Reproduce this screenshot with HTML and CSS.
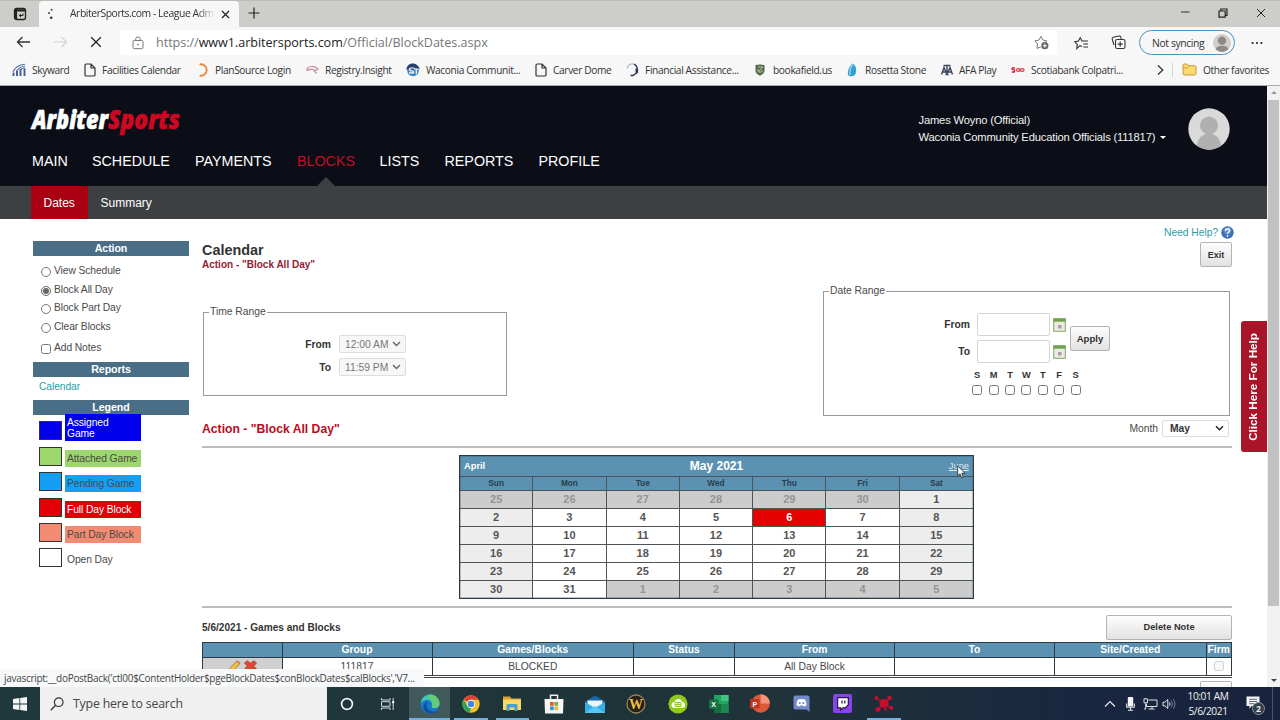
FILE: index.html
```html
<!DOCTYPE html>
<html lang="en">
<head>
    <meta charset="UTF-8">
    <meta name="viewport" content="width=device-width, initial-scale=1.0">
    <title>ArbiterSports.com - League Administration</title>
    <link rel="stylesheet" href="styles.css">
</head>
<body>

    <!-- Browser tabs -->
    <div class="titlebar">
        <div class="tab-actions">
            <svg width="14" height="14" viewBox="0 0 14 14"><rect x="1.5" y="1.5" width="11" height="11" rx="2" fill="none" stroke="#222" stroke-width="1.3"/><path d="M1.5 3.3h11M3 1.5v11" stroke="#222" stroke-width="2.2"/><path d="M10 6.5v2H6.5M8 7L6.3 8.5 8 10" fill="none" stroke="#222"/></svg>
        </div>
        <div class="tab">
            <svg class="spinner" width="8" height="12" viewBox="0 0 8 12"><circle cx="4.6" cy="1.8" r="1" fill="#444"/><circle cx="2" cy="5" r="1" fill="#444"/><circle cx="4.2" cy="9.8" r="1.2" fill="#222"/></svg>
            <span class="tab-title">ArbiterSports.com - League Adm</span>
            <svg width="9" height="9" viewBox="0 0 9 9"><path d="M1 1l7 7M8 1L1 8" stroke="#222" stroke-width="1.2"/></svg>
        </div>
        <svg class="new-tab" width="12" height="12" viewBox="0 0 12 12"><path d="M6 0.5v11M0.5 6h11" stroke="#222" stroke-width="1.2"/></svg>
        <div class="window-buttons">
            <svg width="10" height="10" viewBox="0 0 10 10"><path d="M1 4h8.5" stroke="#333"/></svg>
            <svg width="10" height="10" viewBox="0 0 10 10"><path d="M1 3h6.2v6.2H1zM2.8 2.8V1H9v6.5H7.4" fill="none" stroke="#222" stroke-width="1.2"/></svg>
            <svg width="10" height="10" viewBox="0 0 10 10"><path d="M1 1l8 8M9 1L1 9" stroke="#222"/></svg>
        </div>
    </div>

    <!-- Address bar -->
    <div class="toolbar">
        <div class="nav-buttons">
            <svg width="15" height="12" viewBox="0 0 15 12"><path d="M14 6H1.5M6.5 1L1.5 6l5 5" fill="none" stroke="#333" stroke-width="1.3"/></svg>
            <svg width="15" height="12" viewBox="0 0 15 12"><path d="M1 6h12.5M8.5 1l5 5-5 5" fill="none" stroke="#d2d2d2" stroke-width="1.2"/></svg>
            <svg width="12" height="12" viewBox="0 0 12 12"><path d="M1.2 1.2l9.6 9.6M10.8 1.2l-9.6 9.6" stroke="#222" stroke-width="1.3"/></svg>
        </div>
        <div class="address">
            <svg width="12" height="14" viewBox="0 0 12 14"><rect x="1" y="4.5" width="10" height="8.2" rx="1.3" fill="none" stroke="#777"/><path d="M3.7 4.5V3.2a2.3 2.3 0 0 1 4.6 0v1.3" fill="none" stroke="#777"/><circle cx="6" cy="8.6" r="0.9" fill="#777"/></svg>
            <span class="url">https://<b>www1.arbitersports.com</b>/Official/BlockDates.aspx</span>
            <svg width="15" height="15" viewBox="0 0 15 15"><path d="M6.7 12L3 13.4l.5-4.5L.9 5.8l3.9-.6L7 1.4l2 3.7 3.8.8-1.6 1.6" fill="none" stroke="#777"/><circle cx="10.8" cy="10.7" r="3.6" fill="#666"/><path d="M10.8 8.7v4M8.8 10.7h4" stroke="#fff"/></svg>
        </div>
        <svg class="tool-fav" width="15" height="14" viewBox="0 0 15 14"><path d="M8 10.5L6 9.7 2.8 12.6 3.3 8.4.8 5.7l3.7-.6L6.2 1.6 8 5h1.5" fill="none" stroke="#333" stroke-width="1.1"/><path d="M9.3 5H14M9.3 8H14M9.3 11H14" stroke="#333" stroke-width="1.1"/></svg>
        <svg class="tool-col" width="15" height="15" viewBox="0 0 15 15"><rect x="4.5" y="4.5" width="9.5" height="9" rx="1.8" fill="none" stroke="#333" stroke-width="1.1"/><path d="M9.2 6.5v5.2M6.6 9.1h5.2M3 10L1.2 4a1.5 1.5 0 0 1 1-1.8L8 1a1.5 1.5 0 0 1 1.8 1.2l.4 1.6" fill="none" stroke="#333" stroke-width="1.1"/></svg>
        <div class="profile-pill">
            <span>Not syncing</span>
            <svg width="18" height="18" viewBox="0 0 18 18"><clipPath id="pc"><circle cx="9" cy="9" r="9"/></clipPath><circle cx="9" cy="9" r="9" fill="#d1cfcb"/><g clip-path="url(#pc)" fill="#8e8b87"><circle cx="9" cy="6.6" r="4.2"/><ellipse cx="9" cy="15.4" rx="6.4" ry="3.6"/></g></svg>
        </div>
        <svg class="tool-more" width="12" height="4" viewBox="0 0 12 4"><circle cx="1.6" cy="2" r="1.1" fill="#222"/><circle cx="6" cy="2" r="1.1" fill="#222"/><circle cx="10.4" cy="2" r="1.1" fill="#222"/></svg>
    </div>

    <!-- Favorites bar -->
    <div class="bookmarks">
        <a class="bookmark bm-skyward"><svg width="15" height="14" viewBox="0 0 15 14"><path d="M1.5 13V9.5M5 13V7.500M8.500 13V6M12.500 13V5.500" stroke="#405a9c" stroke-width="1.900"/><path d="M1 9Q4 2 13 1.300M4.500 8Q8 3.400 13 3.200M8 7.500Q9.500 5 13 5" fill="none" stroke="#5a70ab" stroke-width="1.100"/></svg><span>Skyward</span></a>
        <a class="bookmark bm-facilities"><svg width="12" height="14" viewBox="0 0 12 14"><path d="M1 2.2Q1 1 2.2 1H7l4 4v7q0 1-1 1H2.2Q1 13 1 12zM7 1v4h4" fill="none" stroke="#333" stroke-width="1.2"/></svg><span>Facilities Calendar</span></a>
        <a class="bookmark bm-plan"><svg width="13" height="14" viewBox="0 0 13 14"><path d="M3.500 1.500a5.700 5.700 0 1 1 0 11" fill="none" stroke="#e6893e" stroke-width="1.800"/></svg><span>PlanSource Login</span></a>
        <a class="bookmark bm-registry"><svg width="13" height="10" viewBox="0 0 13 10"><path d="M1 5.200C1 .8 8.500 0 12 4.200L8.500 5.500 6 4.200zM8 5.500l2.500 3" fill="none" stroke="#ca8998" stroke-width="1.200"/></svg><span>Registry.Insight</span></a>
        <a class="bookmark bm-waconia"><svg width="14" height="14" viewBox="0 0 14 14"><circle cx="7" cy="7.500" r="5.800" fill="#3f87bf"/><path d="M.3 6.500C1 1 6 0 8.500 .8S13.500 4 13.600 6z" fill="#24416e"/><path d="M8.500 5H5q-2 0-1.500 1.500T6 8q2 .3 1.500 1.800H3M8 6h4.500M10.300 6v5" fill="none" stroke="#fff" stroke-width="1.200"/></svg><span>Waconia Communit...</span></a>
        <a class="bookmark bm-carver"><svg width="12" height="14" viewBox="0 0 12 14"><path d="M1 2.200Q1 1 2.200 1H7l4 4v7q0 1-1 1H2.200Q1 13 1 12zM7 1v4h4" fill="none" stroke="#333" stroke-width="1.200"/></svg><span>Carver Dome</span></a>
        <a class="bookmark bm-financial"><svg width="13" height="14" viewBox="0 0 13 14"><path d="M1.200 5.500A5 5 0 0 1 8 1.200" fill="none" stroke="#b9bfcc" stroke-width="1.400"/><path d="M8 1.200Q12.500 3.500 11 9.500L7 12.500H4.500" fill="none" stroke="#2b3558" stroke-width="1.300"/><path d="M9.500 5.500l2.800.5-.6 4.200-2.200-.6z" fill="#2b3558"/></svg><span>Financial Assistance...</span></a>
        <a class="bookmark bm-book"><svg width="10" height="12" viewBox="0 0 10 12"><path d="M.5 1L5 .5l4.500.5v6Q9 10 5 11.700 1 10 .5 7z" fill="#53694b"/><path d="M3 3h5L3.500 7.500M3 5v3h4V6" fill="none" stroke="#b7c5a0"/></svg><span>bookafield.us</span></a>
        <a class="bookmark bm-rosetta"><svg width="10" height="14" viewBox="0 0 10 14"><path d="M5.500.5Q9 2 9.200 7T6 13.200Q1 14 .8 10.500.8 5 5.500.5z" fill="#38a0cf"/><path d="M6 1.500Q2.500 5 3 12" fill="none" stroke="#90d3ec" stroke-width="1.300"/></svg><span>Rosetta Stone</span></a>
        <a class="bookmark bm-afa"><svg width="12" height="12" viewBox="0 0 12 12"><path d="M2.500 1.500h7M6 1.500v9M4.500 10.500h3M.5 10.500l2.500-7 2.500 5.500M1.500 8h3M6.500 9L9 3.500l2.500 7M7.500 8h3.500" fill="none" stroke="#36445d" stroke-width="1.400"/></svg><span>AFA Play</span></a>
        <a class="bookmark bm-scotia"><svg width="14" height="6" viewBox="0 0 14 6"><path d="M3.800 1H1.500l-.5 1 2.700 1.300L3.200 5H.8" fill="none" stroke="#d8192f" stroke-width="1.300"/><ellipse cx="7.300" cy="3" rx="1.700" ry="1.400" fill="none" stroke="#dc3a4c" stroke-width="1.200"/><ellipse cx="11.200" cy="3" rx="1.900" ry="1.400" fill="none" stroke="#dc3a4c" stroke-width="1.200"/></svg><span>Scotiabank Colpatri...</span></a>
        <a class="bookmark bm-more"><svg width="7" height="12" viewBox="0 0 7 12"><path d="M1 1.500L5.800 6 1 10.500" fill="none" stroke="#333" stroke-width="1.300"/></svg></a>
        <a class="bookmark bm-other"><svg width="15" height="13" viewBox="0 0 15 13"><path d="M1 2.500Q1 1 2.200 1H5l1.700 1.700h6Q14 2.700 14 4v6.500q0 1.500-1.300 1.500H2.300Q1 12 1 10.500z" fill="#fbdb70" stroke="#c39b3a"/><path d="M1 5h4.500L7 3.300" fill="none" stroke="#c9a443"/></svg><span>Other favorites</span></a>
    </div>

    <!-- Site -->
    <div class="viewport">
        <div class="page">
            <div class="header">
                <div class="header-top">
                    <svg class="logo" width="152" height="30" viewBox="0 0 152 30">
                        <text x="0" y="22.500" textLength="76" lengthAdjust="spacingAndGlyphs" fill="#fff" stroke="#fff">Arbiter</text>
                        <text x="76" y="22.500" textLength="72" lengthAdjust="spacingAndGlyphs" fill="#ce0823" stroke="#ce0823">Sports</text>
                    </svg>
                    <div class="account">
                        <div>James Woyno (Official)</div>
                        <div>Waconia Community Education Officials (111817) <span class="caret"></span></div>
                    </div>
                    <svg class="avatar" width="42" height="42" viewBox="0 0 42 42"><clipPath id="av"><circle cx="21" cy="21" r="20.700"/></clipPath><circle cx="21" cy="21" r="20.700" fill="#dadada"/><g clip-path="url(#av)" fill="#b0b0b0"><circle cx="21" cy="17.500" r="9"/><path d="M9 42Q8 30 17 26h8q9 4 8 16z"/></g></svg>
                </div>
                <div class="menu">
                    <a class="m-main">MAIN</a>
                    <a class="m-schedule">SCHEDULE</a>
                    <a class="m-payments">PAYMENTS</a>
                    <a class="m-blocks active">BLOCKS</a>
                    <a class="m-lists">LISTS</a>
                    <a class="m-reports">REPORTS</a>
                    <a class="m-profile">PROFILE</a>
                </div>
            </div>
            <div class="submenu">
                <a class="active">Dates</a>
                <a>Summary</a>
            </div>

            <div class="content">
                <div class="sidebar">
                    <h3>Action</h3>
                    <div class="options">
                        <label><input type="radio" name="action"><span>View Schedule</span></label>
                        <label><input type="radio" name="action" checked><span>Block All Day</span></label>
                        <label><input type="radio" name="action"><span>Block Part Day</span></label>
                        <label><input type="radio" name="action"><span>Clear Blocks</span></label>
                        <label class="notes"><input type="checkbox"><span>Add Notes</span></label>
                    </div>
                    <h3>Reports</h3>
                    <a class="report-link">Calendar</a>
                    <h3>Legend</h3>
                    <div class="legend">
                        <div class="legend-row assigned"><i></i><span>Assigned<br>Game</span></div>
                        <div class="legend-row attached"><i></i><span>Attached Game</span></div>
                        <div class="legend-row pending"><i></i><span>Pending Game</span></div>
                        <div class="legend-row full"><i></i><span>Full Day Block</span></div>
                        <div class="legend-row part"><i></i><span>Part Day Block</span></div>
                        <div class="legend-row open"><i></i><span>Open Day</span></div>
                    </div>
                </div>

                <div class="main">
                    <div class="main-head">
                        <div class="titles">
                            <h1>Calendar</h1>
                            <h2>Action - "Block All Day"</h2>
                        </div>
                        <div class="help">
                            <div class="need-help">Need Help? <svg width="13" height="13" viewBox="0 0 13 13"><circle cx="6.500" cy="6.500" r="6.200" fill="#3f6cb4"/><circle cx="6.500" cy="4.500" r="4" fill="#5f8bcc"/><path d="M4.500 5q0-2 2-2t2 1.800q0 1-1.300 1.700-.7.400-.7 1.300" fill="none" stroke="#fff" stroke-width="1.300"/><circle cx="6.500" cy="9.900" r=".9" fill="#fff"/></svg></div>
                            <button class="btn btn-exit">Exit</button>
                        </div>
                    </div>

                    <div class="ranges">
                        <fieldset class="time-range">
                            <legend>Time Range</legend>
                            <div class="field"><b>From</b><div class="select">12:00 AM<svg width="9" height="6" viewBox="0 0 9 6"><path d="M1 1l3.500 3.500L8 1" fill="none" stroke="#666" stroke-width="1.400"/></svg></div></div>
                            <div class="field"><b>To</b><div class="select">11:59 PM<svg width="9" height="6" viewBox="0 0 9 6"><path d="M1 1l3.500 3.500L8 1" fill="none" stroke="#666" stroke-width="1.400"/></svg></div></div>
                        </fieldset>
                        <fieldset class="date-range">
                            <legend>Date Range</legend>
                            <div class="dates">
                                <div class="date-inputs">
                                    <div class="field"><b>From</b><input type="text"><svg width="13" height="14" viewBox="0 0 13 14"><rect x=".7" y=".7" width="11.600" height="12.600" fill="#e9ece4" stroke="#81a763"/><path d="M.5 2.200h12" stroke="#6fa04c" stroke-width="3"/><rect x="5" y="7" width="3.500" height="3.500" fill="#b39aa4"/></svg></div>
                                    <div class="field"><b>To</b><input type="text"><svg width="13" height="14" viewBox="0 0 13 14"><rect x=".7" y=".7" width="11.600" height="12.600" fill="#e9ece4" stroke="#81a763"/><path d="M.5 2.200h12" stroke="#6fa04c" stroke-width="3"/><rect x="5" y="7" width="3.500" height="3.500" fill="#b39aa4"/></svg></div>
                                </div>
                                <button class="btn btn-apply">Apply</button>
                            </div>
                            <div class="weekdays">
                                <label>S<input type="checkbox"></label>
                                <label>M<input type="checkbox"></label>
                                <label>T<input type="checkbox"></label>
                                <label>W<input type="checkbox"></label>
                                <label>T<input type="checkbox"></label>
                                <label>F<input type="checkbox"></label>
                                <label>S<input type="checkbox"></label>
                            </div>
                        </fieldset>
                    </div>

                    <div class="month-row">
                        <h2>Action - "Block All Day"</h2>
                        <span class="month-label">Month</span>
                        <div class="select month">May<svg width="9" height="7" viewBox="0 0 9 7"><path d="M1 1.200l3.500 3.500L8 1.200" fill="none" stroke="#222" stroke-width="1.500"/></svg></div>
                    </div>

                    <div class="calendar-wrap">
                        <div class="calendar">
                            <div class="cal-head">
                                <span>April</span>
                                <strong>May 2021</strong>
                                <span class="next">June
                                    <svg class="cursor" width="9" height="14" viewBox="0 0 9 14"><path d="M.7.800v10l2.300-2 1.700 4 1.600-.7-1.600-3.800h3.200z" fill="#fff" stroke="#222" stroke-width=".8"/></svg>
                                </span>
                            </div>
                            <div class="cal-grid" id="cal-grid"></div>
                        </div>
                    </div>

                    <div class="games-head">
                        <h4>5/6/2021 - Games and Blocks</h4>
                        <button class="btn btn-delete">Delete Note</button>
                    </div>
                    <table class="games">
                        <colgroup><col class="c-edit"><col class="c-group"><col class="c-games"><col class="c-status"><col class="c-from"><col class="c-to"><col class="c-site"><col class="c-firm"></colgroup>
                        <tr><th></th><th>Group</th><th>Games/Blocks</th><th>Status</th><th>From</th><th>To</th><th>Site/Created</th><th>Firm</th></tr>
                        <tr>
                            <td class="edit">
                                <svg width="13" height="13" viewBox="0 0 13 13"><path d="M1 12l1.200-4L9 1l3 2.500L5 11z" fill="#f0c043" stroke="#a07a2b" stroke-width=".8"/><path d="M8.500 1.500L9.600.5l2.800 2.300-1 1.200z" fill="#de6f60"/><path d="M1 12l.6-2 1.400 1.200z" fill="#333"/></svg>
                                <svg width="13" height="12" viewBox="0 0 13 12"><path d="M3 .7l3.500 2.500L10 .7l2.500 2.500L9.700 6l2.800 3-2.500 2.500L6.500 9 3 11.500.5 9l2.800-3L.5 3.200z" fill="#dd4a32" stroke="#a82e20" stroke-width=".7"/></svg>
                            </td>
                            <td>111817</td><td>BLOCKED</td><td></td><td>All Day Block</td><td></td><td></td><td><input type="checkbox" disabled></td>
                        </tr>
                    </table>
                    <button class="btn btn-bottom"></button>
                </div>
            </div>
            <div class="help-tab"><span>Click Here For Help</span></div>
        </div>
        <div class="scrollbar">
            <i class="up"></i>
            <div class="thumb"></div>
            <i class="down"></i>
        </div>
        <div class="status-bubble">javascript:__doPostBack('ctl00$ContentHolder$pgeBlockDates$conBlockDates$calBlocks','V7...</div>
    </div>

    <!-- Taskbar -->
    <div class="taskbar">
        <div class="start"><svg width="14" height="14" viewBox="0 0 14 14"><path d="M0 2l6.400-.9v5.500H0zM7.200 1L14 0v6.600H7.200zM0 7.400h6.400v5.500L0 12zM7.200 7.400H14V14l-6.800-1z" fill="#f4f6f6"/></svg></div>
        <div class="search">
            <svg width="14" height="14" viewBox="0 0 14 14"><circle cx="8.700" cy="5.200" r="4.300" fill="none" stroke="#333" stroke-width="1.200"/><path d="M5.600 8.300L.8 13.200" stroke="#333" stroke-width="1.300"/></svg>
            <span>Type here to search</span>
        </div>
        <div class="apps">
            <div class="app"><svg width="14" height="14" viewBox="0 0 14 14"><circle cx="7" cy="7" r="5.400" fill="none" stroke="#eef2f2" stroke-width="1.700"/></svg></div>
            <div class="app"><svg width="16" height="14" viewBox="0 0 16 14"><path d="M1.500 1v2h8.500V1M1.500 13v-2h8.500v2M1.500 4.700h8.500v4.600H1.500zM13.200 1v12" fill="none" stroke="#cfd7d8"/><rect x="12.200" y="4" width="2" height="2.200" fill="#fff"/></svg></div>
            <div class="app open current"><svg width="20" height="20" viewBox="0 0 20 20"><circle cx="10" cy="10" r="9.500" fill="#1679ca"/><path d="M.7 9C2 2 7 .4 10.500.5 16 .8 19.500 5 19.500 9.500c0 3-2.500 4.500-5 4.500-3 0-3.300-1.500-2.300-2.700C12.500 7 8 5 4.500 6.500 2 7.500 1 9 .7 9z" fill="#45c2b4"/><path d="M10.500.5C16 .8 19.500 5 19.500 9.500c0 3-2.500 4.500-5 4.500-3 0-3.300-1.500-2.300-2.700C14 8 11 4 8 3.500z" fill="#64cf72"/><path d="M6.500 11c0 4 3.500 6.500 7.500 6.500 1.500 0 3-.6 4-1.400-4 4.500-11 4-13.500.2S4.500 7.500 8 7.500c-1 .8-1.500 2-1.500 3.500z" fill="#104f9c"/></svg></div>
            <div class="app open"><svg width="18" height="18" viewBox="0 0 18 18"><circle cx="9" cy="9" r="8.700" fill="#f2c02c"/><path d="M9 9L1.500 4.600A8.700 8.700 0 0 1 16.600 4.800H9z" fill="#dc4437"/><path d="M1.500 4.600L5.400 11 9 13l-1.300 4.600A8.700 8.700 0 0 1 1.500 4.600z" fill="#2f9f56"/><circle cx="9" cy="9" r="4.200" fill="#fff"/><circle cx="9" cy="9" r="3.300" fill="#4384e6"/></svg></div>
            <div class="app open"><svg width="20" height="17" viewBox="0 0 20 17"><path d="M1 1.500h7l1.500 2H19v4H1z" fill="#dca132"/><path d="M1 4.500h18V15H1z" fill="#fad867"/><path d="M4.500 16V10.500q0-1.500 1.500-1.500h8q1.500 0 1.500 1.500V16h-3v-3.500h-5V16z" fill="#479dd0"/></svg></div>
            <div class="app"><svg width="20" height="20" viewBox="0 0 20 20"><path d="M6.500 5V1.300h7V5" fill="none" stroke="#eee" stroke-width="1.500"/><path d="M.5 5h19l-.5 14.500H1z" fill="#f5f5f5"/><path d="M6 8h3.700v3.700H6z" fill="#e2593a"/><path d="M10.400 8h3.700v3.700h-3.700z" fill="#75ad3f"/><path d="M6 12.400h3.700v3.700H6z" fill="#3293d6"/><path d="M10.400 12.400h3.700v3.700h-3.700z" fill="#efbb32"/></svg></div>
            <div class="app"><svg width="20" height="18" viewBox="0 0 20 18"><path d="M0 6.500L10 .5l10 6V18H0z" fill="#1768a8"/><path d="M2.500 5.500h15v7h-15z" fill="#e9f3f8"/><path d="M0 7l10 6 10-6v11H0z" fill="#35aee6"/><path d="M0 18l10-7 10 7z" fill="#55c7f2"/></svg></div>
            <div class="app"><svg width="20" height="20" viewBox="0 0 20 20"><circle cx="10" cy="10" r="9" fill="#25221d" stroke="#9a8352" stroke-width="1.300"/><text class="app-letter serif" x="10" y="15" text-anchor="middle" fill="#f0bd45">W</text></svg></div>
            <div class="app"><svg width="20" height="20" viewBox="0 0 20 20"><circle cx="10" cy="10" r="9.600" fill="#8fcb1f"/><path d="M6.500 14q-3-.3-3-3t3-3q1-3 4-3 2.800 0 3.600 3 2.900.2 2.900 3t-3 3z" fill="#fff"/><path d="M7 8.500h6v4H7zM10 8.500v4M7 10.500h6" fill="none" stroke="#8fcb1f"/></svg></div>
            <div class="app"><svg width="20" height="18" viewBox="0 0 20 18"><path d="M5 0h14.500v18H5z" fill="#22a565"/><path d="M12 0h7.500v6H12z" fill="#42c480"/><path d="M5 9h7.500v9H5z" fill="#166d3c"/><path d="M12 9h7.500v9H12z" fill="#1c8a50"/><rect x="0" y="4.500" width="9.500" height="9.500" fill="#147440"/><text class="app-letter small" x="4.700" y="12" text-anchor="middle" fill="#fff">X</text></svg></div>
            <div class="app"><svg width="20" height="19" viewBox="0 0 20 19"><circle cx="10.700" cy="9.500" r="9.200" fill="#dc583a"/><path d="M10.700.3a9.200 9.200 0 0 1 9.200 9.200h-9.200z" fill="#f4937b"/><rect x="0" y="5" width="9.500" height="9.500" fill="#b9371f"/><text class="app-letter small" x="4.900" y="12.500" text-anchor="middle" fill="#fff">P</text></svg></div>
            <div class="app"><svg width="17" height="17" viewBox="0 0 17 17"><path d="M2.500.5h12q2 0 2 2V17l-3-2.600h-11q-2 0-2-2V2.500q0-2 2-2z" fill="#7488cc"/><path d="M5 4.500Q8.500 3.500 12 4.500q1.700 2.500 1.500 5.800-1 1-2.600 1.200l-.8-1.100H7l-.8 1.100q-1.700-.2-2.700-1.200Q3.300 7 5 4.500z" fill="#fff"/><circle cx="6.700" cy="8" r="1.100" fill="#7488cc"/><circle cx="10.300" cy="8" r="1.100" fill="#7488cc"/></svg></div>
            <div class="app"><svg width="19" height="19" viewBox="0 0 19 19"><rect width="19" height="19" rx="2" fill="#8a42ea"/><path d="M5 4h10v6.500L12 13.500H9.800L7.500 15.800v-2.300H5z" fill="#fff"/><path d="M4.600 3.600h10.700v7.200l-3 3H9.900l-2.300 2.300v-2.300h-3z" fill="none" stroke="#28203a" stroke-width="1.200"/><path d="M9 6.500v3M11.800 6.500v3" stroke="#28203a" stroke-width="1.300"/></svg></div>
            <div class="app open"><svg width="20" height="18" viewBox="0 0 20 18"><path d="M2.500 3L10 9l6-6M10 9l7.500 4.500M10 9l-6.500 5.500" stroke="#b90e2c" stroke-width="1.500" fill="none"/><g fill="#c40f2d"><circle cx="10" cy="8.500" r="4.600"/><circle cx="2.500" cy="3" r="2"/><circle cx="15.500" cy="3" r="2.300"/><circle cx="17.500" cy="13" r="2"/><circle cx="4" cy="14.500" r="2.500"/><circle cx="11.500" cy="14.500" r="1.300"/></g></svg></div>
        </div>
        <div class="tray">
            <svg width="12" height="8" viewBox="0 0 12 8"><path d="M1 6.500l5-5 5 5" fill="none" stroke="#e5e9ec" stroke-width="1.200"/></svg>
            <svg class="mic" width="9" height="14" viewBox="0 0 9 14"><rect x="1.800" y="0" width="5.400" height="9.500" rx="1" fill="#f5f5f5"/><path d="M.7 6.500v3.700h7.600V6.500M4.500 10v3.500M2 13.300h5" fill="none" stroke="#e5e9ec" stroke-width="1.100"/></svg>
            <svg class="net" width="15" height="12" viewBox="0 0 15 12"><path d="M5.500 2h8.500v6.500H3.500V6M9 8.500V11M5.500 11h6M1 .8h3.500v4H1zM2.700 5v6H1" fill="none" stroke="#dfe4e8"/></svg>
            <svg class="vol" width="14" height="12" viewBox="0 0 14 12"><path d="M1 4.200h2L5.800 1.500v9L3 7.800H1z" fill="none" stroke="#e5e9ec"/><path d="M7.500 4.300q1.200 1.700 0 3.400" fill="none" stroke="#e5e9ec"/><path d="M9.300 2.700q2.400 3.300 0 6.600M11.300 1.200q3.300 4.800 0 9.600" fill="none" stroke="#71808e"/></svg>
            <div class="clock"><div>10:01 AM</div><div>5/6/2021</div></div>
            <div class="notifications">
                <svg width="14" height="14" viewBox="0 0 14 14"><path d="M.5.500h13v9.500H5.500L3.500 13v-3h-3z" fill="#f4f6f7"/><path d="M3 3.300h8M3 5.500h8M3 7.700h5" stroke="#52606d" stroke-width=".9"/></svg>
                <span class="badge">2</span>
            </div>
        </div>
    </div>

    <script>
        const weekdays = ['Sun', 'Mon', 'Tue', 'Wed', 'Thu', 'Fri', 'Sat'];
        const grid = document.getElementById('cal-grid');

        function addCell(text, className) {
            const cell = document.createElement('div');
            cell.className = className;
            cell.textContent = text;
            grid.appendChild(cell);
        }

        weekdays.forEach(day => addCell(day, 'cal-day'));

        // 25 April to 5 June, six weeks
        for (let i = 0; i < 42; i++) {
            const date = new Date(2021, 3, 25 + i);
            let className = 'cal-cell';
            if (date.getMonth() !== 4) className += ' other';
            else if (i % 7 === 0 || i % 7 === 6) className += ' weekend';
            if (date.getMonth() === 4 && date.getDate() === 6) className += ' blocked';
            addCell(date.getDate(), className);
        }
    </script>

</body>
</html>
```
FILE: styles.css
```css
* {
    box-sizing: border-box;
}

body {
    margin: 0;
    width: 1280px;
    height: 720px;
    overflow: hidden;
    display: flex;
    flex-direction: column;
    font-family: 'Liberation Sans', Arial, sans-serif;
    font-size: 10.3px;
    color: #4a4a4a;
    background-color: #fff;
}

svg {
    display: block;
    flex: none;
}

h1, h2, h3, h4 {
    margin: 0;
}

/* browser */
.titlebar {
    height: 27px;
    flex: none;
    background-color: #cdcdca;
    border-top: 1px solid #bcbcb9;
    display: flex;
    align-items: center;
    font-family: 'Open Sans', 'Noto Sans', sans-serif;
}

.tab-actions {
    width: 39px;
    padding-left: 13px;
}

.tab {
    width: 200px;
    height: 26px;
    background-color: #f7f7f7;
    border-radius: 4px 4px 0 0;
    display: flex;
    align-items: center;
    padding-left: 8px;
}

.tab-title {
    width: 144px;
    margin: -2px 7px 0 15px;
    font-size: 10.4px;
    letter-spacing: -0.45px;
    color: #333;
    white-space: nowrap;
    -webkit-mask-image: linear-gradient(to right, #000 88%, rgba(0, 0, 0, 0.1));
    mask-image: linear-gradient(to right, #000 88%, rgba(0, 0, 0, 0.1));
}

.new-tab {
    margin: -2px 0 0 9px;
}

.window-buttons {
    margin: -3px 14px 0 auto;
    display: flex;
    gap: 28px;
}

.toolbar {
    height: 31px;
    flex: none;
    background-color: #f7f7f7;
    display: flex;
    align-items: center;
    font-family: 'Open Sans', 'Noto Sans', sans-serif;
}

.nav-buttons {
    width: 120px;
    padding-left: 16px;
    display: flex;
    align-items: center;
    gap: 22px;
}

.nav-buttons svg {
    margin-top: -1px;
}

.address {
    width: 937px;
    height: 25px;
    background-color: #fff;
    border-radius: 3px;
    display: flex;
    align-items: center;
    padding: 0 8px 0 12px;
}

.url {
    flex: 1;
    padding-left: 12px;
    font-size: 12.6px;
    letter-spacing: -0.04px;
    color: #777;
}

.url b {
    font-weight: 400;
    color: #222;
}

.tool-fav {
    margin-left: 17px;
}

.tool-col {
    margin-left: 22px;
}

.profile-pill {
    width: 96px;
    height: 25px;
    margin-left: 13px;
    border: 1px solid #4a93bd;
    border-radius: 13px;
    display: flex;
    align-items: center;
    justify-content: space-between;
    padding: 0 3px 0 12px;
    font-size: 10.4px;
    letter-spacing: -0.4px;
    color: #333;
    white-space: nowrap;
}

.tool-more {
    margin-left: 16px;
}

.bookmarks {
    height: 28px;
    flex: none;
    background-color: #f7f7f7;
    border-bottom: 1px solid #aaa;
    display: flex;
    padding: 0 0 4px 12px;
    font-family: 'Open Sans', 'Noto Sans', sans-serif;
    font-size: 10.2px;
    letter-spacing: -0.37px;
    color: #333;
}

.bookmark {
    display: flex;
    align-items: center;
    gap: 6px;
    white-space: nowrap;
    flex: none;
}

.bm-skyward { width: 72px; gap: 5px; }
.bm-facilities { width: 112px; }
.bm-plan { width: 110px; }
.bm-registry { width: 100px; }
.bm-waconia { width: 129px; }
.bm-carver { width: 91px; }
.bm-financial { width: 129px; }
.bm-book { width: 92px; gap: 8px; }
.bm-rosetta { width: 94px; gap: 8px; }
.bm-afa { width: 70px; }
.bm-scotia { width: 146px; }
.bm-more { width: 18px; }

.bm-other {
    align-self: center;
    height: 14px;
    margin-left: -3px;
    padding-left: 9px;
    border-left: 1px solid #d3d3d3;
}

/* page */
.viewport {
    height: 601px;
    flex: none;
    display: flex;
    position: relative;
    overflow: hidden;
}

.page {
    width: 1267px;
    position: relative;
    overflow: hidden;
}

.header {
    height: 100px;
    background-color: #0b0e16;
    display: flex;
    flex-direction: column;
    justify-content: space-between;
}

.header-top {
    display: flex;
    padding: 16px 37px 0 32px;
}

.logo {
    margin-top: 4px;
    overflow: visible;
}

.logo text {
    font-family: 'Open Sans', 'Noto Sans', sans-serif;
    font-size: 26px;
    font-weight: 800;
    font-style: italic;
    stroke-width: 0.6px;
}

.account {
    width: 269.500px;
    margin-left: auto;
    padding-top: 10px;
    font-size: 11.2px;
    letter-spacing: -0.17px;
    line-height: 17px;
    color: #f2f2f2;
    white-space: nowrap;
}

.caret {
    display: inline-block;
    margin-left: 2px;
    vertical-align: 2px;
    border: 3px solid transparent;
    border-top-color: #fff;
    border-bottom: none;
}

.avatar {
    margin-top: 6px;
}

.menu {
    height: 38px;
    display: flex;
    padding-left: 32px;
    font-size: 14.3px;
    line-height: 23px;
    color: #fff;
}

.m-main { width: 60px; }
.m-schedule { width: 103px; }
.m-payments { width: 102px; }
.m-blocks { width: 82.500px; }
.m-lists { width: 65px; }
.m-reports { width: 94px; }

.menu .active {
    color: #c00f28;
}

.menu .active::after {
    content: '';
    display: block;
    width: 0;
    margin: 4px 0 0 17px;
    border: 12px solid transparent;
    border-top: none;
    border-bottom-color: #3d3f43;
}

.submenu {
    height: 33px;
    background-color: #3d3f43;
    display: flex;
    padding-left: 31px;
    font-size: 12px;
    line-height: 34px;
    color: #fff;
}

.submenu a {
    padding: 0 12.500px;
}

.submenu .active {
    width: 57px;
    background-color: #ab0014;
}

.content {
    display: flex;
    padding-left: 33px;
}

.sidebar {
    width: 156px;
    padding-top: 22px;
    letter-spacing: -0.1px;
}

.sidebar h3 {
    height: 15px;
    background-color: #4a6e86;
    color: #fff;
    font-size: 10.67px;
    line-height: 15px;
    text-align: center;
}

.options {
    height: 106px;
    padding-top: 5px;
}

.options label {
    display: flex;
    height: 18.700px;
    align-items: center;
    padding-left: 7.500px;
}

.options input {
    width: 10px;
    height: 10px;
    margin: 3px 3.500px 0 0;
    accent-color: #666;
}

.options .notes {
    margin-top: 2px;
}

.report-link {
    display: block;
    height: 23px;
    padding: 4px 0 0 6px;
    color: #2e9da6;
}

.legend {
    padding-left: 6px;
}

.legend-row {
    display: flex;
    height: 25.300px;
    align-items: flex-start;
}

.legend-row i {
    width: 23px;
    height: 19px;
    border: 1px solid #333;
    margin-right: 3px;
}

.legend-row span {
    width: 76px;
    height: 17px;
    margin-top: 3px;
    padding-left: 2px;
    line-height: 17.500px;
    white-space: nowrap;
}

.legend-row.assigned { height: 32px; }
.legend-row.assigned i { margin-top: 6px; background-color: #0000ec; }
.legend-row.assigned span { height: 27px; margin-top: -1px; padding-top: 3px; line-height: 11px; background-color: #0000ec; color: #fff; }
.attached i, .attached span { background-color: #9dd66b; }
.pending i, .pending span { background-color: #129ff4; }
.full i, .full span { background-color: #e20006; }
.full span { color: #fff; }
.part i, .part span { background-color: #f38b73; }

.main {
    width: 1030px;
    margin-left: 13px;
}

.main-head {
    height: 66px;
    display: flex;
    justify-content: space-between;
}

.titles {
    padding-top: 22px;
}

.titles h1 {
    font-size: 14.400px;
    line-height: 18px;
    color: #333;
}

.titles h2 {
    font-size: 10px;
    line-height: 12px;
    color: #932232;
}

.help {
    display: flex;
    flex-direction: column;
    align-items: flex-end;
    padding-top: 6px;
}

.need-help {
    display: flex;
    align-items: center;
    gap: 3px;
    height: 14px;
    margin-right: -2px;
    letter-spacing: -0.05px;
    color: #2e9da6;
}

.btn {
    padding: 0;
    border: 1px solid #b4b4b4;
    border-radius: 2px;
    background: linear-gradient(#fdfdfd, #e2e2e2);
    font-family: inherit;
    font-size: 9.600px;
    font-weight: bold;
    color: #333;
}

.btn-exit {
    width: 32px;
    height: 25px;
    margin-top: 3px;
    font-size: 9px;
}

.ranges {
    display: flex;
    justify-content: space-between;
    padding: 0 2px 0 1px;
}

fieldset {
    margin: 0;
    padding: 0;
    border: 1px solid #999;
    min-width: 0;
}

legend {
    margin-left: 5px;
    padding: 0 1px;
    line-height: 12px;
}

.time-range {
    width: 304px;
    height: 90px;
    margin-top: 21px;
}

.time-range .field {
    width: 202px;
    margin-bottom: 5px;
    gap: 8px;
}

.time-range .field:first-of-type {
    margin-top: 17px;
}

.date-range {
    width: 407px;
    height: 131px;
}

.field {
    display: flex;
    align-items: center;
    justify-content: flex-end;
}

.field b {
    color: #333;
}

.select {
    width: 67px;
    height: 18px;
    padding: 0 4px 0 5px;
    border: 1px solid #ddd;
    border-radius: 2px;
    background-color: #f7f7f7;
    color: #777;
    display: flex;
    align-items: center;
    justify-content: space-between;
    white-space: nowrap;
}

.dates {
    display: flex;
    align-items: center;
    padding-top: 16px;
}

.date-inputs {
    width: 242px;
}

.date-range .field b {
    margin-right: 7px;
}

.date-range .field input {
    width: 73px;
    height: 23px;
    margin: 0 3px 4px 0;
    border: 1px solid #d5d5d5;
    border-radius: 2px;
}

.date-range .field b,
.date-range .field svg {
    margin-bottom: 4px;
}

.btn-apply {
    width: 40px;
    height: 25px;
    margin: 0 0 3px 4px;
}

.weekdays {
    display: flex;
    padding: 2px 0 0 145px;
}

.weekdays label {
    width: 16.400px;
    display: flex;
    flex-direction: column;
    align-items: center;
    font-size: 9.300px;
    font-weight: bold;
    line-height: 12px;
    color: #333;
}

.weekdays input {
    width: 10px;
    height: 10px;
    margin: 4px 0 0;
}

.month-row {
    height: 32px;
    display: flex;
    align-items: center;
    padding: 0 3px 5px 0;
    border-bottom: 2px solid #bdbdbd;
}

.month-row h2 {
    font-size: 12.200px;
    color: #bd0a22;
}

.month-label {
    margin-left: auto;
    margin-right: 4px;
}

.select.month {
    height: 17px;
    padding-left: 7px;
    background-color: #fff;
    font-weight: bold;
    color: #333;
}

.calendar-wrap {
    height: 160px;
    display: flex;
    justify-content: center;
    padding: 7px 1px 0 0;
    border-bottom: 2px solid #bdbdbd;
}

.calendar {
    width: 515px;
    height: 144px;
    border: 1px solid #2e3a42;
    outline: 1px solid rgba(60, 70, 80, 0.3);
    outline-offset: -2px;
}

.cal-head {
    height: 20px;
    background-color: #5b92b1;
    color: #fff;
    display: grid;
    grid-template-columns: 1fr auto 1fr;
    align-items: center;
    padding: 0 4px;
    font-size: 9.300px;
    font-weight: bold;
}

.cal-head strong {
    font-size: 12px;
}

.cal-head .next {
    position: relative;
    text-align: right;
    text-decoration: underline;
    font-weight: normal;
    color: #dce8ef;
}

.cursor {
    position: absolute;
    right: 3px;
    top: 4px;
}

.cal-grid {
    display: grid;
    grid-template-columns: repeat(7, 1fr);
    grid-template-rows: 14px repeat(6, 18px);
}

.cal-grid div {
    border-top: 1px solid #4d5559;
    border-right: 1px solid #4d5559;
    text-align: center;
    font-weight: bold;
}

.cal-grid div:nth-child(7n) {
    border-right: none;
}

.cal-grid .cal-day {
    background-color: #5b92b1;
    font-size: 8.300px;
    line-height: 13px;
    color: #273f4d;
}

.cal-grid .cal-cell {
    font-size: 11px;
    line-height: 16px;
    color: #555;
    background-color: #fff;
}

.cal-grid .weekend { background-color: #ededed; }
.cal-grid .other { background-color: #ccc; color: #949494; }
.cal-grid .blocked { background-color: #e60000; color: #fff; }

.games-head {
    height: 34px;
    display: flex;
    align-items: center;
    justify-content: space-between;
    padding-top: 4px;
}

.games-head h4 {
    font-size: 10.100px;
    color: #333;
}

.btn-delete {
    width: 126px;
    height: 25px;
    font-size: 9.300px;
}

.games {
    width: 1030px;
    table-layout: fixed;
    border-collapse: collapse;
    text-align: center;
    border-bottom: 3px double #444;
}

.c-edit { width: 79.500px; }
.c-group { width: 150px; }
.c-games { width: 201.500px; }
.c-status { width: 101px; }
.c-from { width: 160px; }
.c-to { width: 160px; }
.c-site { width: 151.500px; }

.games th,
.games td {
    padding: 0;
    border: 1px solid #2e3a42;
}

.games th {
    height: 15px;
    padding-bottom: 1px;
    line-height: 13px;
    background-color: #5b92b1;
    color: #fff;
}

.games td {
    height: 17px;
    padding-bottom: 1px;
    line-height: 13px;
}

.games .edit {
    background-color: #d0d0d0;
}

.edit svg {
    display: inline-block;
    vertical-align: middle;
}

.games input {
    width: 10px;
    height: 10px;
    margin: 3px 0 0;
    display: inline-block;
}

.btn-bottom {
    display: block;
    width: 32px;
    height: 25px;
    margin: 3px 0 0 auto;
}

.help-tab {
    position: absolute;
    top: 235px;
    right: 0;
    width: 26px;
    height: 131px;
    background-color: #a91428;
    border-radius: 3px 0 0 3px;
    display: flex;
    align-items: center;
    justify-content: center;
}

.help-tab span {
    writing-mode: vertical-rl;
    transform: rotate(180deg);
    margin-right: 3px;
    font-size: 11.700px;
    font-weight: bold;
    color: #fff;
    white-space: nowrap;
}

.scrollbar {
    width: 13px;
    background-color: #f1f1f1;
    display: flex;
    flex-direction: column;
    align-items: center;
}

.scrollbar i {
    border: 3px solid transparent;
}

.scrollbar .up {
    margin: 5px 0 6px;
    border-top: none;
    border-bottom-color: #999;
}

.scrollbar .thumb {
    width: 11px;
    height: 506px;
    background-color: #c1c1c1;
}

.scrollbar .down {
    margin: auto 0 5px;
    border-bottom: none;
    border-top-color: #444;
}

.status-bubble {
    position: absolute;
    left: 0;
    bottom: 0;
    width: 424px;
    height: 18px;
    padding-left: 4px;
    background-color: #f7f8f9;
    border-radius: 0 3px 0 0;
    font-family: 'Open Sans', 'Noto Sans', sans-serif;
    font-size: 10px;
    letter-spacing: -0.29px;
    line-height: 18px;
    color: #444;
    white-space: nowrap;
}

/* taskbar */
.taskbar {
    height: 33px;
    flex: none;
    display: flex;
    background: linear-gradient(to right, #1f383c, #1f3338 60%, #192640 85%, #18233d);
    font-family: 'Open Sans', 'Noto Sans', sans-serif;
}

.start {
    width: 40px;
    display: flex;
    align-items: center;
    justify-content: center;
}

.search {
    width: 286.500px;
    background-color: #f0f0f0;
    display: flex;
    align-items: center;
    gap: 9px;
    padding-left: 10px;
    font-size: 12.300px;
    letter-spacing: -0.18px;
    color: #444;
}

.apps {
    display: flex;
}

.app {
    width: 41.300px;
    display: flex;
    align-items: center;
    justify-content: center;
    position: relative;
}

.app.open::after {
    content: '';
    position: absolute;
    left: 4px;
    right: 4px;
    bottom: 0;
    height: 2px;
    background-color: #76b0dc;
}

.app.current {
    background-color: #42595c;
}

.app.current::after {
    left: 0;
    right: 0;
}

.app-letter {
    font-family: 'Liberation Sans', Arial, sans-serif;
    font-size: 7px;
    font-weight: bold;
}

.app-letter.serif {
    font-family: 'Liberation Serif', serif;
    font-size: 14px;
}

.tray {
    margin-left: auto;
    width: 176px;
    display: flex;
    align-items: center;
    color: #eef1f3;
}

.mic { margin-left: 10px; }
.net { margin-left: 8px; }
.vol { margin-left: 4px; }

.clock {
    width: 64px;
    margin-left: 0;
    font-size: 10.200px;
    letter-spacing: -0.4px;
    line-height: 15px;
    text-align: center;
}

.notifications {
    position: relative;
    margin-left: 3px;
    width: 30px;
    height: 33px;
    padding: 9px 0 0 3px;
    border-right: 1px solid #4b5667;
}

.badge {
    position: absolute;
    left: 9px;
    top: 15px;
    width: 13px;
    height: 13px;
    border-radius: 50%;
    border: 1px solid #8a939e;
    background-color: #353d46;
    font-size: 8.500px;
    font-weight: bold;
    line-height: 11px;
    text-align: center;
}
```
